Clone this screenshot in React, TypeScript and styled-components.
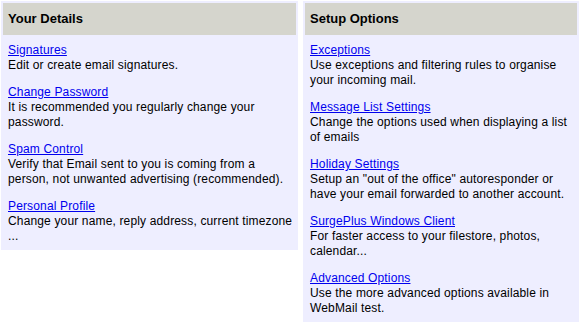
import styled, { createGlobalStyle } from "styled-components";

const GlobalStyle = createGlobalStyle`
  html, body {
    margin: 0;
    padding: 0;
    background: #ffffff;
  }
  body {
    font-family: "Liberation Sans", Arial, sans-serif;
  }
`;

// Styled Components
const Page = styled.div`
  display: flex;
  align-items: flex-start;
  gap: 5px;
  padding: 1px 0 0 1px;
`;

const Panel = styled.section<{ $width: number; $minHeight?: number }>`
  width: ${(p) => p.$width}px;
  min-height: ${(p) => p.$minHeight ?? 0}px;
  box-sizing: border-box;
  background-color: #eeeeff;
  padding: 2px;
`;

const PanelTitle = styled.h2`
  margin: 0;
  height: 32px;
  line-height: 32px;
  padding: 0 5px;
  background-color: #d5d5cd;
  color: #000000;
  font-size: 13px;
  font-weight: bold;
`;

const ItemList = styled.div`
  display: flex;
  flex-direction: column;
  gap: 12px;
  padding: 8px 3px 4px 5px;
`;

const Item = styled.div`
  font-size: 12px;
  line-height: 15px;
  letter-spacing: 0.15px;
  color: #000000;
`;

const ItemLink = styled.a`
  display: block;
  width: fit-content;
  color: #0000ee;
  text-decoration: underline;
  cursor: pointer;
`;

const ItemText = styled.div``;

type Option = { title: string; text: string };

const details: Option[] = [
  { title: "Signatures", text: "Edit or create email signatures." },
  {
    title: "Change Password",
    text: "It is recommended you regularly change your password.",
  },
  {
    title: "Spam Control",
    text: "Verify that Email sent to you is coming from a person, not unwanted advertising (recommended).",
  },
  {
    title: "Personal Profile",
    text: "Change your name, reply address, current timezone ...",
  },
];

const setup: Option[] = [
  {
    title: "Exceptions",
    text: "Use exceptions and filtering rules to organise your incoming mail.",
  },
  {
    title: "Message List Settings",
    text: "Change the options used when displaying a list of emails",
  },
  {
    title: "Holiday Settings",
    text: "Setup an \"out of the office\" autoresponder or have your email forwarded to another account.",
  },
  {
    title: "SurgePlus Windows Client",
    text: "For faster access to your filestore, photos, calendar...",
  },
  {
    title: "Advanced Options",
    text: "Use the more advanced options available in WebMail test.",
  },
];

const OptionsPanel = ({
  title,
  items,
  width,
  minHeight,
}: {
  title: string;
  items: Option[];
  width: number;
  minHeight?: number;
}) => (
  <Panel $width={width} $minHeight={minHeight}>
    <PanelTitle>{title}</PanelTitle>
    <ItemList>
      {items.map((item) => (
        <Item key={item.title}>
          <ItemLink href="#">{item.title}</ItemLink>
          <ItemText>{item.text}</ItemText>
        </Item>
      ))}
    </ItemList>
  </Panel>
);

const App = () => {
  return (
    <>
      <GlobalStyle />
      <Page>
        <OptionsPanel title="Your Details" items={details} width={297} />
        <OptionsPanel
          title="Setup Options"
          items={setup}
          width={276}
          minHeight={324}
        />
      </Page>
    </>
  );
};

export default App;
